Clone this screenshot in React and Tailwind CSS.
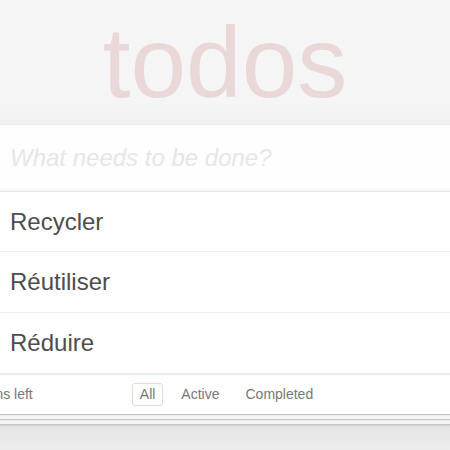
import React from 'react';

const todos = ['Recycler', 'Réutiliser', 'Réduire'];

const App = () => {
    return (
        <div
            className="min-h-[450px] bg-[#f5f5f5] overflow-hidden flex justify-center text-[14px] text-[#4d4d4d]"
            style={{ fontFamily: '"Liberation Sans", Arial, sans-serif' }}
        >
            <div className="w-[550px] shrink-0 pt-[12px] pb-[40px]">
                <h1 className="h-[100px] mb-[13px] text-center text-[100px] leading-[100px] font-normal text-[rgba(175,47,47,0.15)]">
                    todos
                </h1>

                {/* App card */}
                <section className="bg-white shadow-[0_2px_4px_0_rgba(0,0,0,0.2),0_25px_50px_0_rgba(0,0,0,0.1)]">
                    <input
                        className="block w-full pt-[16px] pb-[16px] pl-[60px] pr-[16px] text-[24px] leading-[33.6px] bg-[rgba(0,0,0,0.003)] shadow-[inset_0_-2px_1px_rgba(0,0,0,0.03)] outline-none placeholder:italic placeholder:text-[#e6e6e6]"
                        placeholder="What needs to be done?"
                    />

                    <ul className="border-t border-[#e6e6e6]">
                        {todos.map((t) => (
                            <li key={t} className="border-b border-[#ededed]">
                                <label className="block ml-[45px] py-[15px] pl-[15px] pr-[60px] text-[24px] leading-[29.7px]">
                                    {t}
                                </label>
                            </li>
                        ))}
                    </ul>

                    {/* Footer */}
                    <footer className="relative h-[40px] px-[15px] pt-[8px] border-t border-[#e6e6e6] text-[#777] leading-[20px]">
                        <div className="absolute inset-x-0 bottom-0 h-[50px] pointer-events-none shadow-[0_1px_1px_rgba(0,0,0,0.2),0_8px_0_-3px_#f6f6f6,0_9px_1px_-3px_rgba(0,0,0,0.2),0_16px_0_-6px_#f6f6f6,0_17px_2px_-6px_rgba(0,0,0,0.2)]" />
                        <div className="relative grid grid-cols-[1fr_auto_1fr] items-center h-[23px]">
                            <span>
                                <strong>3</strong> items left
                            </span>
                            <ul className="flex items-center gap-[10px] ml-[3px]">
                                <li>
                                    <a className="block px-[7px] py-[1px] leading-[19px] border border-[rgba(175,47,47,0.2)] rounded-[3px]">All</a>
                                </li>
                                <li>
                                    <a className="block px-[7px] py-[1px] leading-[19px] border border-transparent rounded-[3px]">Active</a>
                                </li>
                                <li>
                                    <a className="block px-[7px] py-[1px] leading-[19px] border border-transparent rounded-[3px]">Completed</a>
                                </li>
                            </ul>
                            <span />
                        </div>
                    </footer>
                </section>
            </div>
        </div>
    );
};

export default App;
